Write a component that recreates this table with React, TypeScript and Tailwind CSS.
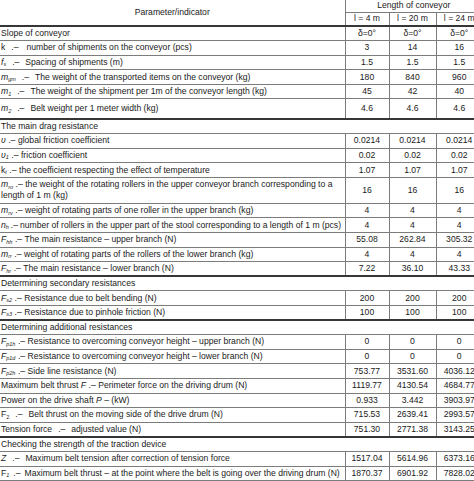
import type { ReactNode } from "react";

type Row =
  | { kind: "section"; label: string }
  | { kind: "data"; label: ReactNode; values: string[]; h?: string };

function Sym({ s, sub, italic = true }: { s: string; sub?: string; italic?: boolean }) {
  return (
    <>
      <span className={italic ? "italic" : ""}>{s}</span>
      {sub ? <sub className="text-[5.5px] italic">{sub}</sub> : null}
    </>
  );
}

// the " .– " joiner between symbol and description
function Dash({ gap = "px-[2.5px]" }: { gap?: string }) {
  return <span className={gap}>.–</span>;
}

const W = "px-[6px]";

const rows: Row[] = [
  { kind: "data", label: "Slope of conveyor", values: ["δ=0°", "δ=0°", "δ=0°"] },
  { kind: "data", label: <>k<Dash gap="pl-[6px] pr-[8px]" />number of shipments on the conveyor (pcs)</>, values: ["3", "14", "16"] },
  { kind: "data", label: <><Sym s="f" sub="s" /><Dash gap={W} />Spacing of shipments (m)</>, values: ["1.5", "1.5", "1.5"] },
  { kind: "data", label: <><Sym s="m" sub="gm" /><Dash gap={W} />The weight of the transported items on the conveyor (kg)</>, values: ["180", "840", "960"] },
  { kind: "data", label: <><Sym s="m" sub="1" /><Dash gap={W} />The weight of the shipment per 1m of the conveyor length (kg)</>, values: ["45", "42", "40"] },
  { kind: "data", label: <><Sym s="m" sub="2" /><Dash gap={W} />Belt weight per 1 meter width (kg)</>, values: ["4.6", "4.6", "4.6"], h: "h-[20px]" },
  { kind: "section", label: "The main drag resistance" },
  { kind: "data", label: <><Sym s="υ" /><Dash />global friction coefficient</>, values: ["0.0214", "0.0214", "0.0214"] },
  { kind: "data", label: <><Sym s="υ" sub="1" /><Dash />friction coefficient</>, values: ["0.02", "0.02", "0.02"] },
  { kind: "data", label: <><Sym s="k" sub="t" italic={false} /><Dash />the coefficient respecting the effect of temperature</>, values: ["1.07", "1.07", "1.07"] },
  {
    kind: "data",
    label: (
      <>
        <Sym s="m" sub="ro" /><Dash />the weight of the rotating rollers in the upper conveyor branch corresponding to a
        <br />
        length of 1 m (kg)
      </>
    ),
    values: ["16", "16", "16"],
    h: "h-[26px]",
  },
  { kind: "data", label: <><Sym s="m" sub="rv" /><Dash />weight of rotating parts of one roller in the upper branch (kg)</>, values: ["4", "4", "4"] },
  { kind: "data", label: <><Sym s="n" sub="h" /><Dash gap="px-[2px]" />number of rollers in the upper part of the stool corresponding to a length of 1 m (pcs)</>, values: ["4", "4", "4"] },
  { kind: "data", label: <><Sym s="F" sub="hh" /><Dash />The main resistance – upper branch (N)</>, values: ["55.08", "262.84", "305.32"] },
  { kind: "data", label: <><Sym s="m" sub="rr" /><Dash />weight of rotating parts of the rollers of the lower branch (kg)</>, values: ["4", "4", "4"] },
  { kind: "data", label: <><Sym s="F" sub="hr" /><Dash />The main resistance – lower branch (N)</>, values: ["7.22", "36.10", "43.33"] },
  { kind: "section", label: "Determining secondary resistances" },
  { kind: "data", label: <><Sym s="F" sub="s2" /><Dash />Resistance due to belt bending (N)</>, values: ["200", "200", "200"] },
  { kind: "data", label: <><Sym s="F" sub="s3" /><Dash />Resistance due to pinhole friction (N)</>, values: ["100", "100", "100"] },
  { kind: "section", label: "Determining additional resistances" },
  { kind: "data", label: <><Sym s="F" sub="p1h" /><Dash />Resistance to overcoming conveyor height – upper branch (N)</>, values: ["0", "0", "0"] },
  { kind: "data", label: <><Sym s="F" sub="p1d" /><Dash />Resistance to overcoming conveyor height – lower branch (N)</>, values: ["0", "0", "0"] },
  { kind: "data", label: <><Sym s="F" sub="p2h" /><Dash />Side line resistance (N)</>, values: ["753.77", "3531.60", "4036.12"] },
  { kind: "data", label: <>Maximum belt thrust <Sym s="F" /><Dash />Perimeter force on the driving drum (N)</>, values: ["1119.77", "4130.54", "4684.77"] },
  { kind: "data", label: <>Power on the drive shaft <Sym s="P" /> – (kW)</>, values: ["0.933", "3.442", "3903.97"] },
  { kind: "data", label: <>F<sub className="text-[5.5px]">2</sub><Dash gap={W} />Belt thrust on the moving side of the drive drum (N)</>, values: ["715.53", "2639.41", "2993.57"] },
  { kind: "data", label: <>Tension force<Dash gap={W} />adjusted value (N)</>, values: ["751.30", "2771.38", "3143.25"] },
  { kind: "section", label: "Checking the strength of the traction device" },
  { kind: "data", label: <><Sym s="Z" /><Dash gap={W} />Maximum belt tension after correction of tension force</>, values: ["1517.04", "5614.96", "6373.16"] },
  { kind: "data", label: <><Sym s="F" sub="1" italic={false} /><Dash gap="px-[4px]" />Maximum belt thrust – at the point where the belt is going over the driving drum (N)</>, values: ["1870.37", "6901.92", "7828.02"] },
];

export default function App() {
  return (
    <div className="w-[474px] h-[481px] overflow-hidden bg-white font-['Liberation_Sans',Arial,sans-serif] text-[8.6px] leading-[11px] text-[#1a1a1a]">
      <table className="w-[482px] table-fixed border-collapse">
        <colgroup>
          <col className="w-[345px]" />
          <col className="w-[44px]" />
          <col className="w-[47px]" />
          <col className="w-[46px]" />
        </colgroup>
        <thead>
          <tr className="h-[12px]">
            <th rowSpan={2} className="border-r border-[#7c7c7c] border-b-2 border-b-[#363636] font-normal text-center align-middle">
              Parameter/indicator
            </th>
            <th colSpan={3} className="border-b border-[#7c7c7c] font-normal text-center">
              Length of conveyor
            </th>
          </tr>
          <tr className="h-[14px]">
            <th className="border-r border-[#7c7c7c] border-b-2 border-b-[#363636] font-normal text-center">l = 4 m</th>
            <th className="border-r border-[#7c7c7c] border-b-2 border-b-[#363636] font-normal text-center">l = 20 m</th>
            <th className="border-b-2 border-b-[#363636] font-normal text-center whitespace-nowrap">l = 24 m</th>
          </tr>
        </thead>
        <tbody>
          {rows.map((row, i) => {
            const next = rows[i + 1];
            const bottom =
              next?.kind === "section"
                ? "border-b-2 border-b-[#363636]"
                : "border-b border-b-[#7c7c7c]";
            if (row.kind === "section") {
              return (
                <tr key={i} className="h-[14.6px]">
                  <td colSpan={4} className={`px-[1px] ${bottom}`}>
                    {row.label}
                  </td>
                </tr>
              );
            }
            return (
              <tr key={i} className={row.h ?? "h-[14.6px]"}>
                <td className={`px-[1px] whitespace-nowrap overflow-hidden border-r border-r-[#7c7c7c] ${bottom}`}>
                  {row.label}
                </td>
                {row.values.map((v, j) => (
                  <td
                    key={j}
                    className={`text-center whitespace-nowrap ${j < 2 ? "border-r border-r-[#7c7c7c]" : ""} ${bottom}`}
                  >
                    {v}
                  </td>
                ))}
              </tr>
            );
          })}
        </tbody>
      </table>
    </div>
  );
}
